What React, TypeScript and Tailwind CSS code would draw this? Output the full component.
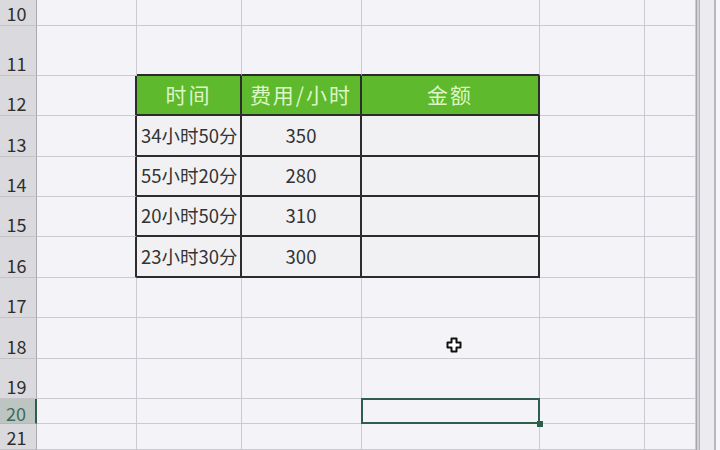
import React from "react";

// column widths after the row header (A..F), then the window edge
const colWidths = [100, 105, 120, 178, 105, 51];
const rows = [
  { n: 10, h: 26 },
  { n: 11, h: 50 },
  { n: 12, h: 40 },
  { n: 13, h: 41 },
  { n: 14, h: 40 },
  { n: 15, h: 40 },
  { n: 16, h: 41 },
  { n: 17, h: 40 },
  { n: 18, h: 41 },
  { n: 19, h: 40 },
  { n: 20, h: 25 },
  { n: 21, h: 26 },
];

const tableData: Record<number, string[]> = {
  12: ["时间", "费用/小时", "金额"],
  13: ["34小时50分", "350", ""],
  14: ["55小时20分", "280", ""],
  15: ["20小时50分", "310", ""],
  16: ["23小时30分", "300", ""],
};

function Cell({ row, col }: { row: number; col: number }) {
  const inTable = row >= 12 && row <= 16 && col >= 1 && col <= 3;
  const isHeader = row === 12 && inTable;
  const leftOfTable = row >= 12 && row <= 16 && col === 0;
  const aboveTable = row === 11 && col >= 1 && col <= 3;
  const selected = row === 20 && col === 3;

  let cls = "relative flex items-center border-r border-b border-[#cbcad0] bg-[#f4f3f8]";
  if (inTable) {
    cls = "relative flex items-center border-r-2 border-b-2 border-[#2c2c2c] " + (isHeader ? "bg-[#5fb92c]" : "bg-[#f1f1f3]");
  } else if (leftOfTable) {
    cls = "relative flex items-center border-r-2 border-b border-r-[#2c2c2c] border-b-[#cbcad0] bg-[#f4f3f8]";
  } else if (aboveTable) {
    cls = "relative flex items-center border-r border-b-2 border-r-[#cbcad0] border-b-[#2c2c2c] bg-[#f4f3f8]";
  }
  if (selected) cls += " z-10";

  const text = inTable ? tableData[row][col - 1] : "";

  return (
    <div className={cls}>
      {text && (
        <span
          className={
            isHeader
              ? "w-full text-center text-[21px] tracking-[2px] text-[#ddf6c6]"
              : col === 1
              ? "w-full pl-[4px] text-[18.5px] text-[#333]"
              : "w-full text-center text-[18.5px] text-[#333]"
          }
        >
          {text}
        </span>
      )}
      {selected && (
        <>
          <div className="absolute inset-[-1px] border-2 border-[#2f5e4c]" />
          <div className="absolute right-[-4px] bottom-[-4px] h-[6px] w-[6px] bg-[#2f5e4c]" />
        </>
      )}
      {row === 18 && col === 3 && (
        <svg className="absolute left-[84px] top-[19px]" width="16" height="16" viewBox="0 0 16 16">
          <path
            d="M5.5 1.5h5v4h4v5h-4v4h-5v-4h-4v-5h4z"
            fill="#fff"
            stroke="#111"
            strokeWidth="2"
            strokeLinejoin="round"
          />
        </svg>
      )}
    </div>
  );
}

export default function App() {
  return (
    <div
      className="flex h-[450px] w-[720px] overflow-hidden bg-[#f4f3f8]"
      style={{ fontFamily: '"Noto Sans CJK SC", "Noto Sans", sans-serif' }}
    >
      <div
        className="grid w-[696px]"
        style={{
          gridTemplateColumns: `37px ${colWidths.map((w) => w + "px").join(" ")}`,
          gridTemplateRows: rows.map((r) => r.h + "px").join(" "),
        }}
      >
        {rows.map((r) => (
          <React.Fragment key={r.n}>
            <div
              className={
                r.n === 20
                  ? "flex items-end justify-center border-r-2 border-b border-r-[#2f5e4c] border-b-[#b4b8b6] bg-[#bcc5c2] pb-[1px] pr-[3px] text-[18px] leading-none text-[#3d6b57]"
                  : "flex items-end justify-center border-r border-b border-r-[#a9a9ae] border-b-[#c4c3c8] bg-[#dad9de] pb-[3px] pr-[3px] text-[18px] leading-none text-[#2e2e2e]"
              }
            >
              {r.n}
            </div>
            {colWidths.map((_, c) => (
              <Cell key={c} row={r.n} col={c} />
            ))}
          </React.Fragment>
        ))}
      </div>
      {/* window edge / scrollbar strip */}
      <div className="flex h-full flex-1">
        <div className="w-[1px] bg-[#a6a6ac]" />
        <div className="w-[2px] bg-[#d2d2d6]" />
        <div className="w-[1px] bg-[#b2b2b8]" />
        <div className="w-[14px] bg-[#ecebf0]" />
        <div className="w-[2px] bg-[#b8b8bd]" />
        <div className="flex-1 bg-[#f6f6f8]" />
      </div>
    </div>
  );
}
